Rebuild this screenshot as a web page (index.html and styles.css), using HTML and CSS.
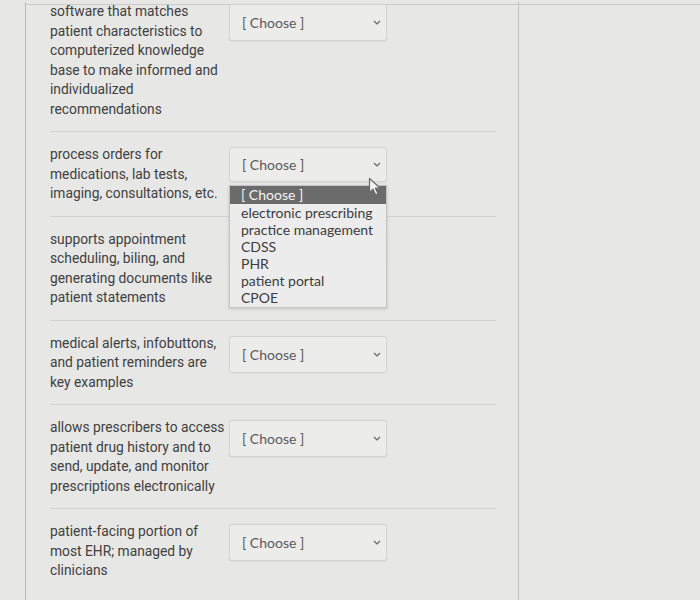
FILE: index.html
```html
<!DOCTYPE html>
<html lang="en">
<head>
  <meta charset="UTF-8">
  <meta name="viewport" content="width=device-width, initial-scale=1.0">
  <title>Matching question</title>
  <link rel="stylesheet" href="styles.css">
</head>
<body>
  <div class="frame">
    <div class="quiz">

      <div class="row first">
        <div class="prompt">software that matches patient characteristics to computerized knowledge base to make informed and individualized recommendations</div>
        <div class="pick">
          <div class="select"><span>[ Choose ]</span>
            <svg class="chev" width="8" height="5" viewBox="0 0 8 5"><path d="M1 1l3 3 3-3" fill="none" stroke="#666" stroke-width="1.2"/></svg>
          </div>
        </div>
      </div>

      <div class="row">
        <div class="prompt">process orders for medications, lab tests, imaging, consultations, etc.</div>
        <div class="pick">
          <div class="select short"><span>[ Choose ]</span>
            <svg class="chev" width="8" height="5" viewBox="0 0 8 5"><path d="M1 1l3 3 3-3" fill="none" stroke="#666" stroke-width="1.2"/></svg>
          </div>
          <!-- open list -->
          <ul class="options">
            <li class="active">[ Choose ]</li>
            <li>electronic prescribing</li>
            <li>practice management</li>
            <li>CDSS</li>
            <li>PHR</li>
            <li>patient portal</li>
            <li>CPOE</li>
          </ul>
          <svg class="cursor" width="16" height="20" viewBox="0 0 16 20">
            <path d="M1.5 1.5v14l3.5-3.3 2.6 5.6 2.4-1.1-2.6-5.5h5z" fill="#f2f2f2" stroke="#6a6a6a" stroke-width="1.2" stroke-linejoin="round"/>
          </svg>
        </div>
      </div>

      <div class="row">
        <div class="prompt">supports appointment scheduling, biling, and generating documents like patient statements</div>
        <div class="pick">
          <div class="select hidden"></div>
        </div>
      </div>

      <div class="row">
        <div class="prompt">medical alerts, infobuttons, and patient reminders are key examples</div>
        <div class="pick">
          <div class="select"><span>[ Choose ]</span>
            <svg class="chev" width="8" height="5" viewBox="0 0 8 5"><path d="M1 1l3 3 3-3" fill="none" stroke="#666" stroke-width="1.2"/></svg>
          </div>
        </div>
      </div>

      <div class="row">
        <div class="prompt">allows prescribers to access patient drug history and to send, update, and monitor prescriptions electronically</div>
        <div class="pick">
          <div class="select"><span>[ Choose ]</span>
            <svg class="chev" width="8" height="5" viewBox="0 0 8 5"><path d="M1 1l3 3 3-3" fill="none" stroke="#666" stroke-width="1.2"/></svg>
          </div>
        </div>
      </div>

      <div class="row last">
        <div class="prompt">patient-facing portion of most EHR; managed by clinicians</div>
        <div class="pick">
          <div class="select"><span>[ Choose ]</span>
            <svg class="chev" width="8" height="5" viewBox="0 0 8 5"><path d="M1 1l3 3 3-3" fill="none" stroke="#666" stroke-width="1.2"/></svg>
          </div>
        </div>
      </div>

    </div>
  </div>
</body>
</html>
```

FILE: styles.css
```css
html, body {
  margin: 0;
  height: 100%;
  overflow: hidden;
}

body {
  background-color: #e7e7e6;
  font-family: Roboto, "Liberation Sans", sans-serif;
  color: #404040;
}

.frame {
  margin-top: 4px;
  margin-left: 25px;
  border-top: 1px solid #c9c9c9;
}

.quiz {
  width: 494px;
  height: 600px;
  border-left: 1px solid #b9b9b9;
  border-right: 1px solid #c2c2c2;
  padding-left: 24px;
  box-sizing: border-box;
}

.row {
  width: 446px;
  display: grid;
  grid-template-columns: 179px 158px;
  align-items: start;
  padding: 13px 0 12px;
  border-bottom: 1px solid #d2d2d2;
}

.row.first {
  margin-top: -3px;
  padding-top: 0;
}

.row.last {
  border-bottom: none;
}

.prompt {
  font-size: 13.8px;
  line-height: 19.5px;
}

.pick {
  position: relative;
}

.select {
  margin-top: 2px;
  height: 37px;
  box-sizing: border-box;
  display: flex;
  align-items: center;
  justify-content: space-between;
  padding: 0 5px 0 12px;
  background: #ececeb;
  border: 1px solid #d3d3d3;
  border-radius: 3px;
  box-shadow: 0 1px 1px rgba(0,0,0,0.04);
  font-family: Lato, "Liberation Sans", sans-serif;
  font-size: 14px;
  color: #5a5a5a;
}

.select.short {
  height: 35px;
}

.chev {
  display: block;
}

.options {
  position: absolute;
  top: 40px;
  left: 0;
  width: 100%;
  box-sizing: border-box;
  margin: 0;
  padding: 0 0 1px;
  list-style: none;
  background: #ececec;
  border: 1px solid #c4c4c4;
  box-shadow: 0 1px 3px rgba(0,0,0,0.15);
  font-family: Lato, "Liberation Sans", sans-serif;
  font-size: 14px;
  line-height: 17px;
  color: #3c3c3c;
  z-index: 2;
}

.options li {
  padding-left: 11px;
}

.options li.active {
  background: #6b6b6b;
  color: #f4f4f4;
  line-height: 18px;
}

.cursor {
  position: absolute;
  left: 139px;
  top: 32px;
  z-index: 3;
}
```
